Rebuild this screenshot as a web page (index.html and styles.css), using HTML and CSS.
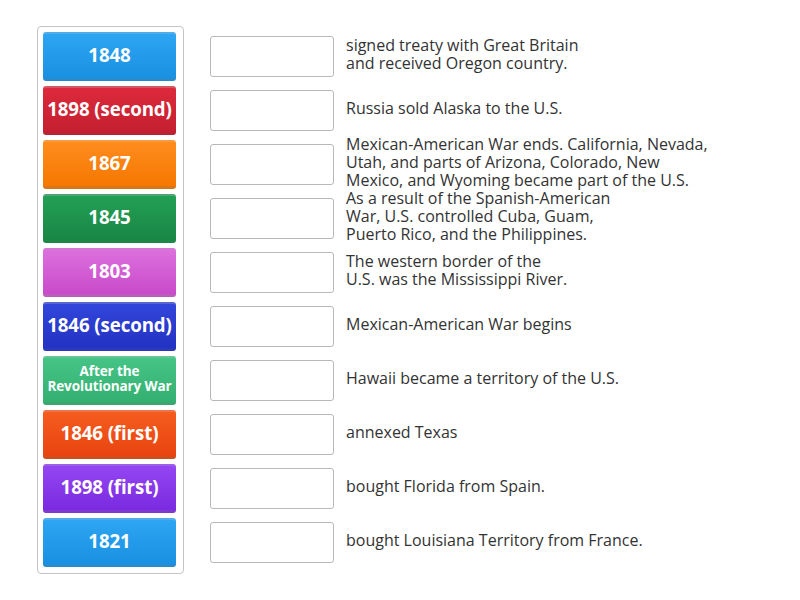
FILE: index.html
```html
<!DOCTYPE html>
<html>
<head>
<meta charset="utf-8">
<link rel="stylesheet" href="styles.css">
</head>
<body>
<div class="page">
  <div class="bank">
    <div class="tile c-blue">1848</div>
    <div class="tile c-red">1898 (second)</div>
    <div class="tile c-orange">1867</div>
    <div class="tile c-green">1845</div>
    <div class="tile c-pink">1803</div>
    <div class="tile c-indigo">1846 (second)</div>
    <div class="tile c-mint small">After the<br>Revolutionary War</div>
    <div class="tile c-vermil">1846 (first)</div>
    <div class="tile c-purple">1898 (first)</div>
    <div class="tile c-blue">1821</div>
  </div>
  <div class="rows">
    <div class="row"><div class="slot"></div><div class="desc">signed treaty with Great Britain<br>and received Oregon country.</div></div>
    <div class="row"><div class="slot"></div><div class="desc">Russia sold Alaska to the U.S.</div></div>
    <div class="row"><div class="slot"></div><div class="desc">Mexican-American War ends. California, Nevada,<br>Utah, and parts of Arizona, Colorado, New<br>Mexico, and Wyoming became part of the U.S.</div></div>
    <div class="row"><div class="slot"></div><div class="desc">As a result of the Spanish-American<br>War, U.S. controlled Cuba, Guam,<br>Puerto Rico, and the Philippines.</div></div>
    <div class="row"><div class="slot"></div><div class="desc">The western border of the<br>U.S. was the Mississippi River.</div></div>
    <div class="row"><div class="slot"></div><div class="desc">Mexican-American War begins</div></div>
    <div class="row"><div class="slot"></div><div class="desc">Hawaii became a territory of the U.S.</div></div>
    <div class="row"><div class="slot"></div><div class="desc">annexed Texas</div></div>
    <div class="row"><div class="slot"></div><div class="desc">bought Florida from Spain.</div></div>
    <div class="row"><div class="slot"></div><div class="desc">bought Louisiana Territory from France.</div></div>
  </div>
</div>
</body>
</html>
```

FILE: styles.css
```css
html, body {
  margin: 0;
  padding: 0;
  background: #fff;
  font-family: "Open Sans", "Liberation Sans", sans-serif;
}
.page {
  display: flex;
  align-items: flex-start;
  padding: 26px 0 0 37px;
}
.bank {
  width: 133px;
  padding: 5px 7px 6px 5px;
  border: 1px solid #c4c4c4;
  border-radius: 4px;
  display: flex;
  flex-direction: column;
  gap: 5px;
}
.tile {
  height: 49px;
  box-sizing: border-box;
  border-radius: 3px;
  display: flex;
  align-items: center;
  justify-content: center;
  text-align: center;
  color: #fff;
  font-weight: 700;
  font-size: 18.7px;
  line-height: 20px;
  letter-spacing: -0.1px;
  border-top: 2px solid rgba(255,255,255,0.25);
  border-bottom: 3px solid rgba(0,0,0,0.15);
  padding-bottom: 3px;
  white-space: nowrap;
}
.tile.small {
  font-size: 13.5px;
  line-height: 15px;
}
.c-blue { background: linear-gradient(#2ea6f2, #1a90e2); }
.c-red { background: linear-gradient(#dc2a3c, #c41f30); }
.c-orange { background: linear-gradient(#ff8c1e, #f57800); }
.c-green { background: linear-gradient(#22a055, #1a8646); }
.c-pink { background: linear-gradient(#dc70dc, #c94acb); }
.c-indigo { background: linear-gradient(#3346dc, #2232c2); }
.c-mint { background: linear-gradient(#45c487, #34b070); }
.c-vermil { background: linear-gradient(#f65c1e, #e84410); }
.c-purple { background: linear-gradient(#9446f2, #7a2ae0); }
.rows {
  margin-left: 26px;
  margin-top: 1px;
  display: flex;
  flex-direction: column;
}
.row {
  height: 54px;
  display: flex;
  align-items: center;
}
.slot {
  align-self: flex-start;
  margin-top: 9px;
  width: 124px;
  height: 41px;
  box-sizing: border-box;
  border: 1px solid #b8b8b8;
  border-radius: 3px;
  background: #fff;
  flex-shrink: 0;
}
.desc {
  margin-left: 12px;
  font-size: 16px;
  line-height: 18px;
  color: #333;
  white-space: nowrap;
}
```
